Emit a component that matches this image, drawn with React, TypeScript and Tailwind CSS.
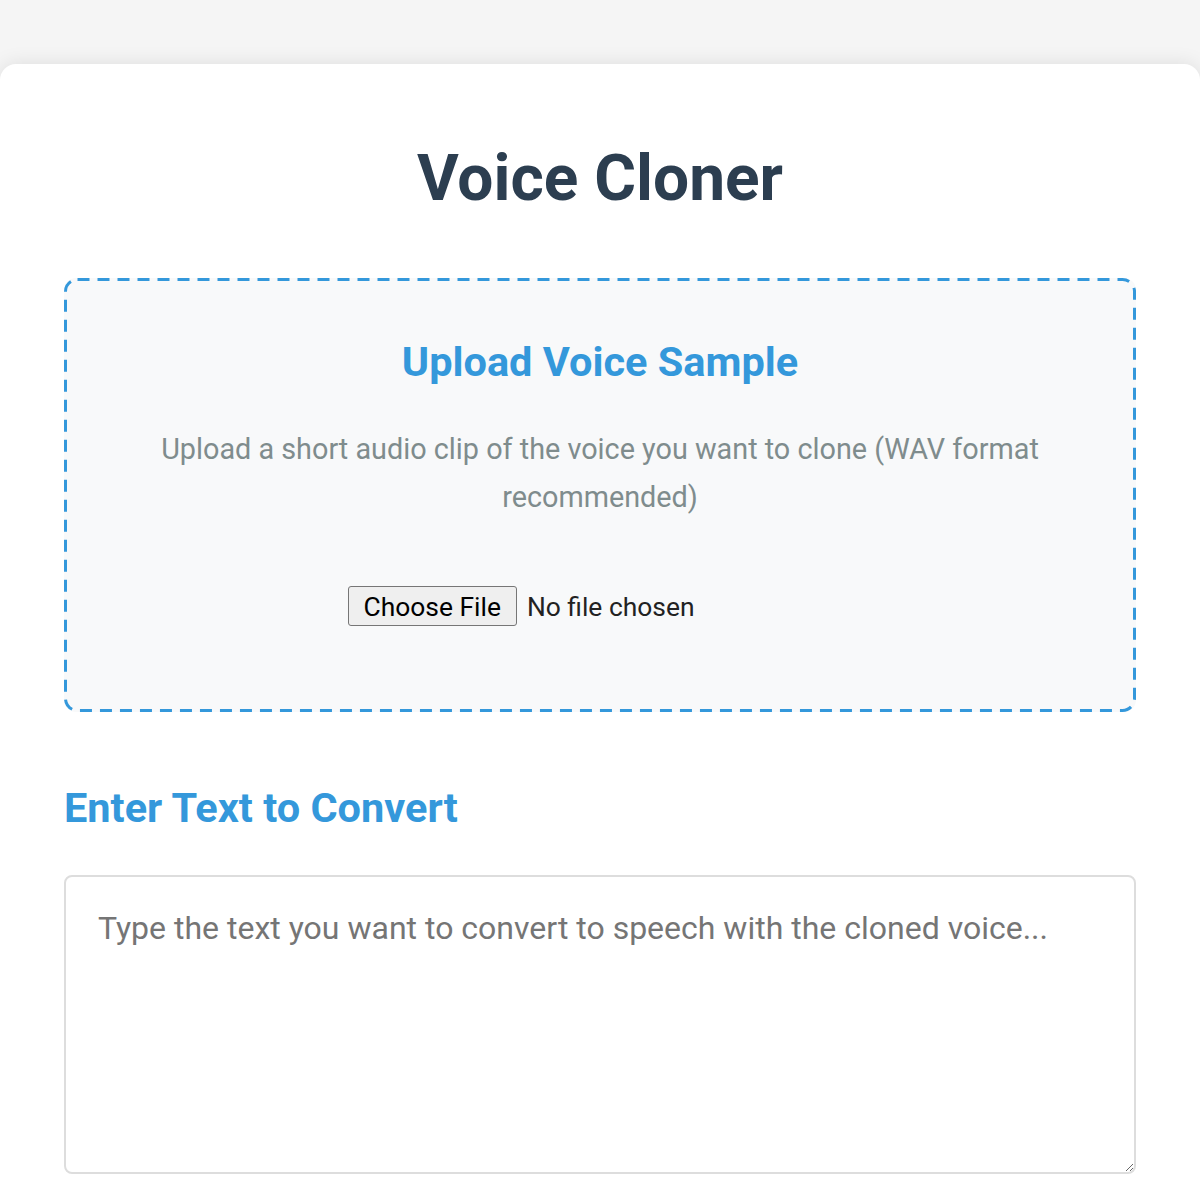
import React from "react";

const DashedFrame = () => (
  <svg className="absolute inset-0 w-full h-full pointer-events-none" aria-hidden="true">
    <rect
      x="1.5"
      y="1.5"
      rx="12"
      ry="12"
      className="w-[calc(100%-3px)] h-[calc(100%-3px)]"
      fill="none"
      stroke="#3498db"
      strokeWidth="3"
      strokeDasharray="12 8"
    />
  </svg>
);

const App = () => {
  return (
    <div className="min-h-screen bg-[#f5f5f5] pt-16 font-['Roboto',_'Liberation_Sans',_sans-serif] leading-[1.6]">
      <div className="bg-white rounded-[16px] shadow-[0_0_20px_rgba(0,0,0,0.1)] p-16">
        <h1 className="text-center text-[64px] font-bold text-[#2c3e50] mb-12">Voice Cloner</h1>

        <div className="relative rounded-[12px] bg-[#f8f9fa] px-[51px] pt-[55px] pb-[52px] text-center">
          <DashedFrame />
          <h2 className="text-[41.5px] leading-[58px] font-bold text-[#3498db] mb-[34px]">Upload Voice Sample</h2>
          <p className="text-[28.8px] text-[#7f8c8d] leading-[48px] mb-8">
            Upload a short audio clip of the voice you want to clone (WAV format recommended)
          </p>
          <div className="flex justify-center py-[33px]">
            <input
              type="file"
              accept="audio/wav"
              className="text-[26.4px] leading-[40px] text-[#222] file:text-[26.4px] file:px-[15px] file:py-0 file:h-[40px] file:mr-[10px] file:border file:border-[#767676] file:rounded-[3px] file:bg-[#efefef] file:text-black"
            />
          </div>
        </div>

        <h2 className="text-[41.5px] leading-[58px] font-bold text-[#3498db] mt-[67px] mb-[38px]">Enter Text to Convert</h2>
        <textarea
          className="block w-full h-[299px] border-2 border-[#ddd] rounded-[8px] px-8 pt-[33px] pb-8 text-[32px] leading-[36px] text-[#333] placeholder:text-[#757575] outline-none"
          placeholder="Type the text you want to convert to speech with the cloned voice..."
        />
        <div className="h-16" />
      </div>
    </div>
  );
};

export default App;
